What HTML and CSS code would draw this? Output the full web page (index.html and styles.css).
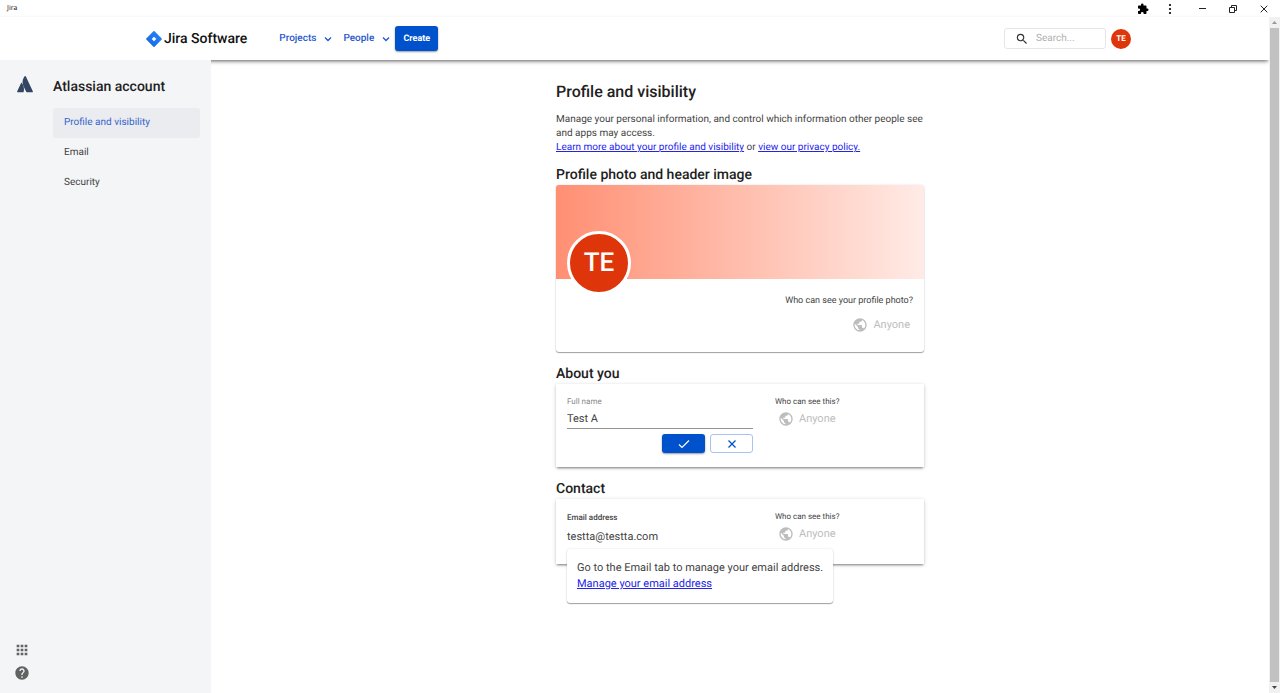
FILE: index.html
```html
<!DOCTYPE html>
<html lang="en">
<head>
<meta charset="utf-8">
<title>Jira</title>
<link rel="stylesheet" href="styles.css">
</head>
<body>
<svg class="sprite" aria-hidden="true">
  <symbol id="globe" viewBox="0 0 24 24"><path d="M12 2C6.480 2 2 6.480 2 12s4.480 10 10 10 10-4.480 10-10S17.520 2 12 2zm-1 17.930c-3.950-.49-7-3.850-7-7.930 0-.62.080-1.210.210-1.790L9 15v1c0 1.100.9 2 2 2v1.930zm6.900-2.540c-.26-.81-1-1.390-1.900-1.390h-1v-3c0-.55-.45-1-1-1H8v-2h2c.55 0 1-.45 1-1V7h2c1.100 0 2-.9 2-2v-.41c2.930 1.190 5 4.060 5 7.410 0 2.080-.8 3.970-2.100 5.390z"/></symbol>
  <symbol id="chevron" viewBox="0 0 10 10"><path d="M2 3.500l3 3 3-3" fill="none" stroke="currentColor" stroke-width="1.300"/></symbol>
</svg>
<div class="titlebar">
  <span>Jira</span>
  <div class="window-tools">
    <button aria-label="Extensions"><svg width="12" height="12" viewBox="0 0 24 24"><path d="M20.500 11H19V7c0-1.100-.9-2-2-2h-4V3.500a2.500 2.500 0 0 0-5 0V5H4c-1.100 0-2 .9-2 2v3.800h1.500a2.700 2.700 0 0 1 0 5.400H2V20c0 1.100.9 2 2 2h3.800v-1.500a2.700 2.700 0 0 1 5.400 0V22H17c1.100 0 2-.9 2-2v-4h1.500a2.500 2.500 0 0 0 0-5z"/></svg></button>
    <button aria-label="More"><svg width="12" height="12" viewBox="0 0 12 12"><circle cx="6" cy="2" r="1.100"/><circle cx="6" cy="6" r="1.100"/><circle cx="6" cy="10" r="1.100"/></svg></button>
  </div>
  <div class="window-controls">
    <button aria-label="Minimize"><svg width="8" height="8" viewBox="0 0 8 8"><path d="M1 3.500h7" stroke="#222"/></svg></button>
    <button aria-label="Restore"><svg width="8" height="8" viewBox="0 0 8 8" fill="none" stroke="#222"><path d="M.5 2.500h5v5h-5zM2.500 2V.5h5v5H6"/></svg></button>
    <button aria-label="Close"><svg width="8" height="8" viewBox="0 0 8 8"><path d="M.7.7l6.600 6.600M7.300.7L.7 7.300" stroke="#222"/></svg></button>
  </div>
</div>
<div class="viewport">
  <div class="page">
    <header class="header">
      <a class="brand" href="#"><svg width="16" height="16" viewBox="0 0 16 16"><defs><linearGradient id="blue" x1="0" y1="1" x2="1" y2="0"><stop offset="0" stop-color="#1667e0"/><stop offset="1" stop-color="#2684ff"/></linearGradient></defs><path fill="url(#blue)" fill-rule="evenodd" d="M7.400.3a.9.9 0 0 1 1.200 0l7.100 7.100a.9.9 0 0 1 0 1.200l-7.100 7.100a.9.9 0 0 1-1.200 0L.3 8.600a.9.9 0 0 1 0-1.200zM8 5.700L5.700 8 8 10.300 10.300 8z"/></svg>Jira Software</a>
      <nav class="topnav">
        <button class="menu">Projects<svg width="10" height="10"><use href="#chevron"/></svg></button>
        <button class="menu">People<svg width="10" height="10"><use href="#chevron"/></svg></button>
        <button class="create">Create</button>
      </nav>
      <label class="search"><svg width="14" height="14" viewBox="0 0 24 24" fill="#333"><path d="M15.500 14h-.79l-.28-.27A6.471 6.471 0 0 0 16 9.500 6.500 6.500 0 1 0 9.500 16c1.610 0 3.090-.59 4.230-1.570l.27.28v.79l5 4.990L20.490 19l-4.990-5zm-6 0C7.010 14 5 11.990 5 9.500S7.010 5 9.500 5 14 7.010 14 9.500 11.990 14 9.500 14z"/></svg><input type="text" placeholder="Search..." aria-label="Search"></label>
      <button class="avatar" aria-label="Account">TE</button>
    </header>
    <div class="columns">
      <aside class="sidebar">
        <div class="rail">
          <svg width="16" height="17" viewBox="0 0 16 17" fill="#344563"><path d="M4.900 6.900c-.2-.3-.6-.3-.8.100L.1 15.600c-.1.300.1.600.4.600h5.700c.2 0 .3-.1.400-.3.900-2.500.4-6.200-1.700-9z"/><path d="M7.400.6C5.300 3.800 5 7 6.500 10.300l2.700 5.500c.1.300.3.400.5.400h5.800c.3 0 .5-.3.400-.6L8.900.6c-.3-.7-1.100-.7-1.500 0z"/></svg>
          <div class="rail-tools">
            <button aria-label="Apps"><svg width="16" height="16" viewBox="0 0 24 24" fill="#626262"><path d="M4 8h4V4H4zm6 12h4v-4h-4zm-6 0h4v-4H4zm0-6h4v-4H4zm6 0h4v-4h-4zm6-10v4h4V4zm-6 4h4V4h-4zm6 6h4v-4h-4zm0 6h4v-4h-4z"/></svg></button>
            <button aria-label="Help"><svg width="16" height="16" viewBox="0 0 24 24" fill="#626262"><path d="M12 2C6.480 2 2 6.480 2 12s4.480 10 10 10 10-4.480 10-10S17.520 2 12 2zm1 17h-2v-2h2v2zm2.070-7.750l-.9.920C13.450 12.900 13 13.500 13 15h-2v-.5c0-1.100.45-2.100 1.170-2.830l1.240-1.260c.37-.36.590-.860.590-1.410 0-1.100-.9-2-2-2s-2 .9-2 2H8c0-2.210 1.790-4 4-4s4 1.790 4 4c0 .88-.36 1.680-.93 2.250z"/></svg></button>
          </div>
        </div>
        <nav class="sidenav">
          <h2>Atlassian account</h2>
          <a class="active" href="#">Profile and visibility</a>
          <a href="#">Email</a>
          <a href="#">Security</a>
        </nav>
      </aside>
      <main class="content">
        <h1>Profile and visibility</h1>
        <p class="intro">Manage your personal information, and control which information other people see and apps may access.<br><a href="#">Learn more about your profile and visibility</a> or <a href="#">view our privacy policy.</a></p>
        <section>
          <h2>Profile photo and header image</h2>
          <div class="card photo">
            <div class="banner"><div class="portrait">TE</div></div>
            <div class="photo-visibility">
              <span class="question">Who can see your profile photo?</span>
              <span class="anyone"><svg width="16" height="16"><use href="#globe"/></svg>Anyone</span>
            </div>
          </div>
        </section>
        <section>
          <h2>About you</h2>
          <div class="card fields">
            <form class="name-form">
              <label for="name">Full name</label>
              <input id="name" type="text" value="Test A">
              <div class="actions">
                <button class="confirm" type="button" aria-label="Save"><svg width="14" height="14" viewBox="0 0 14 14"><path d="M2 7.500l3 3 7-7" fill="none" stroke="currentColor" stroke-width="1.200"/></svg></button>
                <button class="cancel" type="button" aria-label="Cancel"><svg width="10" height="10" viewBox="0 0 10 10"><path d="M1.500 1.500l7 7m0-7l-7 7" fill="none" stroke="currentColor" stroke-width="1.300"/></svg></button>
              </div>
            </form>
            <div class="visibility">
              <span class="question">Who can see this?</span>
              <span class="anyone"><svg width="16" height="16"><use href="#globe"/></svg>Anyone</span>
            </div>
          </div>
        </section>
        <section>
          <h2>Contact</h2>
          <div class="card fields contact">
            <div class="email">
              <h3>Email address</h3>
              <span>testta@testta.com</span>
              <div class="hint">Go to the Email tab to manage your email address.<br><a href="#">Manage your email address</a></div>
            </div>
            <div class="visibility">
              <span class="question">Who can see this?</span>
              <span class="anyone"><svg width="16" height="16"><use href="#globe"/></svg>Anyone</span>
            </div>
          </div>
        </section>
      </main>
    </div>
  </div>
  <div class="scrollbar" aria-hidden="true">
    <svg width="11" height="11" viewBox="0 0 11 11"><path d="M3 7l2.500-3L8 7z" fill="#999"/></svg>
    <div class="thumb"></div>
    <svg width="11" height="11" viewBox="0 0 11 11"><path d="M3 4l2.500 3L8 4z" fill="#444"/></svg>
  </div>
</div>
</body>
</html>
```
FILE: styles.css
```css
* { box-sizing: border-box; }
body {
  margin: 0;
  min-height: 100vh;
  display: flex;
  flex-direction: column;
  font-family: Roboto, sans-serif;
  font-size: 11px;
  text-rendering: geometricPrecision;
  color: #444;
  background: #fff;
}
button, input { font: inherit; color: inherit; text-rendering: inherit; }
button { display: flex; align-items: center; justify-content: center; margin: 0; padding: 0; border: 0; background: none; cursor: pointer; }
svg { flex: none; }
h1, h2, h3, p { margin: 0; }
h1, h2 { font-weight: 500; color: #212121; }
h1 { font-size: 16px; line-height: 20px; }
h2 { padding-top: 2px; font-size: 14px; line-height: 19px; }
a { color: #2424e8; }
.sprite { position: absolute; width: 0; height: 0; }

.titlebar { display: flex; align-items: center; height: 17px; padding: 0 12px 0 7px; font-family: "Open Sans", sans-serif; font-size: 7px; color: #111; }
.window-tools { display: flex; gap: 15px; margin-left: auto; margin-right: 22px; }
.window-controls { display: flex; gap: 23px; }

.viewport { flex: 1; display: flex; }
.page { flex: 1; display: flex; flex-direction: column; }
.scrollbar { display: flex; flex-direction: column; width: 11px; background: #f1f1f1; }
.thumb { flex: 1; margin: 0 1px; background: #c1c1c1; }

.header { display: flex; align-items: center; height: 43px; padding: 0 138px 0 146px; box-shadow: 0 2px 4px -1px rgba(0, 0, 0, .65); }
.brand { display: flex; align-items: center; gap: 2px; font-size: 14px; font-weight: 500; color: #111; text-decoration: none; }
.topnav { display: flex; align-items: center; margin-left: 32px; font-size: 10px; font-weight: 500; color: #1f57cc; }
.menu { gap: 7px; margin-right: 10px; }
.menu + .create { margin-left: -6px; }
.create { width: 43px; height: 25px; border-radius: 3px; background: #0052cc; color: #fff; font-size: 9px; font-weight: 700; box-shadow: 0 1px 2px rgba(0, 0, 0, .4); }
.search { display: flex; align-items: center; gap: 7px; width: 102px; height: 21px; margin-left: auto; padding: 0 10px; border: 1px solid #e6e6e6; border-radius: 3px; }
.search input { width: 100%; min-width: 0; padding: 0; border: 0; outline: 0; font-size: 10px; }
.search input::placeholder { color: #b0b0b0; }
.avatar { width: 20px; height: 20px; margin-left: 5px; border-radius: 50%; background: #de350b; color: #fff; font-size: 8px; font-weight: 700; }

.columns { flex: 1; display: flex; }
.sidebar { position: relative; display: flex; width: 211px; background: #f4f5f7; }
.rail { display: flex; flex-direction: column; justify-content: space-between; width: 53px; padding: 16px 0 12px 17px; }
.rail-tools { display: flex; flex-direction: column; gap: 7px; margin-left: -3px; align-items: flex-start; }
.sidenav { flex: 1; padding: 16px 11px 0 0; }
.sidenav h2 { margin-bottom: 11px; }
.sidenav a { display: block; padding: 0 11px; border-radius: 3px; font-size: 10px; line-height: 30px; color: #444; text-decoration: none; }
.sidenav .active { background: #ebecf0; color: #3465cc; }

.content { flex: 1; max-width: 368px; margin: 0 auto; padding-top: 22px; }
.intro { margin: 11px 0 9px; font-size: 10px; line-height: 14px; }
.content section { margin-bottom: 11px; }
.card { background: #fff; box-shadow: 0 2px 2px -1px rgba(0, 0, 0, .4), 0 1px 4px rgba(0, 0, 0, .2); }
.photo, .hint { border-radius: 3px; box-shadow: 0 1px 1px rgba(0, 0, 0, .35), 0 0 2px rgba(0, 0, 0, .15); }
.banner { display: flex; align-items: flex-end; height: 94px; padding-left: 11px; border-radius: 3px 3px 0 0; background: linear-gradient(to right, #ff8f73, #ffebe6); }
.portrait { display: flex; align-items: center; justify-content: center; width: 64px; height: 64px; margin-bottom: -16px; border: 3px solid #fff; border-radius: 50%; background: #de350b; color: #fff; font-size: 26px; font-weight: 500; }
.photo-visibility { display: flex; flex-direction: column; align-items: flex-end; gap: 10px; height: 73px; padding: 16px 11px 0 0; }
.photo-visibility .anyone { margin-right: 3px; }
.question { font-size: 8px; line-height: 12px; }
.photo-visibility .question { font-size: 9px; }
.anyone { display: flex; align-items: center; gap: 5px; line-height: 16px; color: #bdbdbd; fill: #bdbdbd; }

.fields { display: flex; gap: 22px; padding: 12px 11px; min-height: 83px; }
.name-form, .email { width: 186px; }
.name-form label { display: block; font-size: 8px; line-height: 12px; color: #888; }
.name-form input { display: block; width: 100%; height: 21px; padding: 0; border: 0; border-bottom: 1px solid #949494; outline: 0; }
.actions { display: flex; justify-content: flex-end; gap: 5px; margin-top: 5px; }
.actions button { width: 43px; height: 19px; border-radius: 3px; }
.confirm { background: #0052cc; color: #fff; box-shadow: 0 1px 2px rgba(0, 0, 0, .4); }
.cancel { border: 1px solid #a8c3ee; color: #0052cc; }
.visibility { display: flex; flex-direction: column; gap: 3px; }
.visibility .anyone { margin-left: 3px; }
.contact { min-height: 65px; }
.email { position: relative; }
.email h3 { margin-bottom: 5px; font-size: 8px; line-height: 14px; font-weight: 500; }
.hint { position: absolute; top: 38px; left: 0; padding: 11px 10px; background: #fff; line-height: 16px; white-space: nowrap; }
```
